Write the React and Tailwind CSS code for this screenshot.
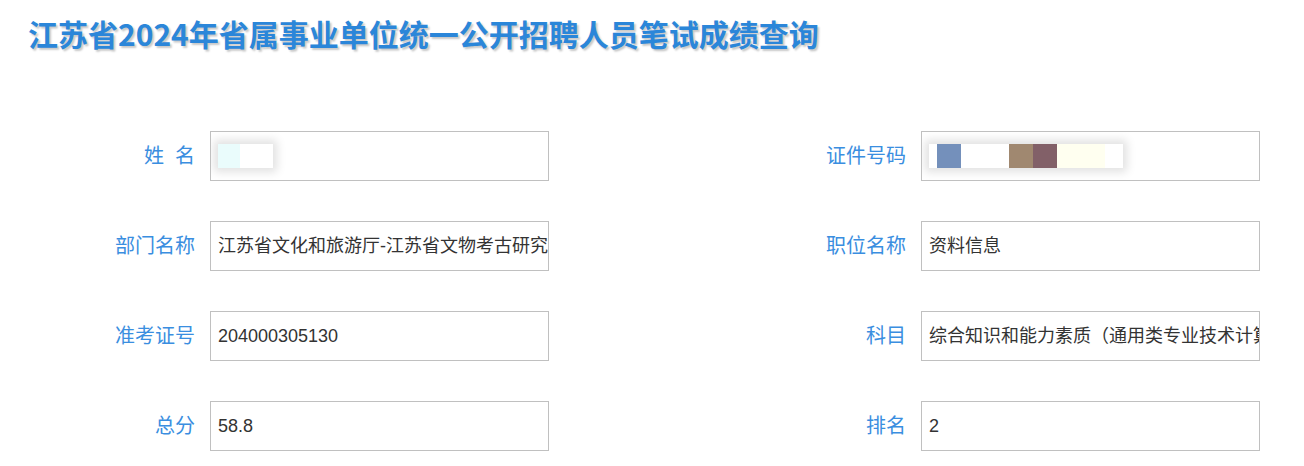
const fields = [
  [{ label: '姓  名', kind: 'name' }, { label: '证件号码', kind: 'id' }],
  [{ label: '部门名称', value: '江苏省文化和旅游厅-江苏省文物考古研究所' }, { label: '职位名称', value: '资料信息' }],
  [{ label: '准考证号', value: '204000305130' }, { label: '科目', value: '综合知识和能力素质（通用类专业技术计算机类）' }],
  [{ label: '总分', value: '58.8' }, { label: '排名', value: '2' }],
];

function Redacted({ kind }) {
  if (kind === 'name') {
    return (
      <div className="flex items-center h-[24px] shadow-[0_0_9px_4px_rgba(0,0,0,0.12)] bg-white">
        <div className="w-[22px] h-[24px] bg-[#eafcfc]" />
        <div className="w-[33px] h-[24px] bg-white" />
      </div>
    );
  }
  return (
    <div className="flex items-center h-[24px] shadow-[0_0_9px_4px_rgba(0,0,0,0.12)] bg-white">
      <div className="w-[8px] h-[24px] bg-white" />
      <div className="w-[24px] h-[24px] bg-[#7490bb]" />
      <div className="w-[48px] h-[24px] bg-white" />
      <div className="w-[24px] h-[24px] bg-[#a08870]" />
      <div className="w-[24px] h-[24px] bg-[#826068]" />
      <div className="w-[48px] h-[24px] bg-[#fffff0]" />
      <div className="w-[18px] h-[24px] bg-white" />
    </div>
  );
}

function Field({ label, value, kind }) {
  return (
    <div className="flex items-center">
      <div className="w-[195px] text-right text-[20px] text-[#3a8ee0] whitespace-pre">{label}</div>
      <div className="ml-[15px] w-[339px] h-[50px] border border-[#c0c0c0] bg-white flex items-center pl-[7px] overflow-hidden whitespace-nowrap text-[18px] text-[#333]">
        {kind ? <Redacted kind={kind} /> : value}
      </div>
    </div>
  );
}

export default function App() {
  return (
    <div className="w-[1304px] h-[466px] bg-white overflow-hidden font-['Liberation_Sans','Noto_Sans_CJK_SC',sans-serif]">
      <h1 className="pl-[28px] pt-[13px] h-[53px] leading-[40px] text-[30px] font-bold text-[#2b86d9] [text-shadow:2px_2px_2px_#c8c8c8] font-['Noto_Sans_CJK_SC',sans-serif]">
        江苏省2024年省属事业单位统一公开招聘人员笔试成绩查询
      </h1>
      <div className="mt-[78px] flex flex-col gap-[40px]">
        {fields.map((row, i) => (
          <div key={i} className="grid grid-cols-[711px_auto]">
            {row.map((f) => (
              <Field key={f.label} {...f} />
            ))}
          </div>
        ))}
      </div>
    </div>
  );
}
